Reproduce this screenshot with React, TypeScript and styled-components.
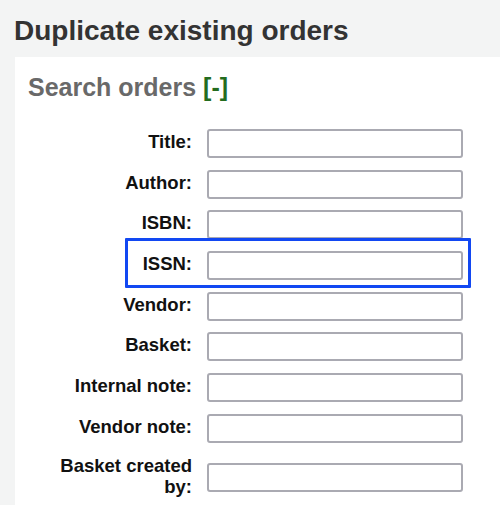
import React from "react";
import styled, { createGlobalStyle } from "styled-components";

const GlobalStyle = createGlobalStyle`
  html, body {
    margin: 0;
    padding: 0;
    height: 100%;
    background: #f3f4f4;
    font-family: "Liberation Sans", Arial, sans-serif;
    overflow: hidden;
  }
  #root {
    height: 100%;
  }
`;

const Page = styled.div`
  box-sizing: border-box;
  height: 100%;
  display: flex;
  flex-direction: column;
  padding: 15px 0 0 15px;
`;

const Title = styled.h1`
  margin: 0 0 10px -1px;
  font-size: 28px;
  line-height: 32px;
  font-weight: 700;
  color: #333;
`;

const Panel = styled.div`
  flex: 1;
  min-height: 0;
  background: #fff;
  padding: 15px 0 0 13px;
`;

const PanelTitle = styled.h3`
  margin: 0;
  font-size: 25px;
  line-height: 30px;
  font-weight: 700;
  color: #696969;
`;

const Toggle = styled.a`
  color: #246c1e;
  text-decoration: none;
  cursor: pointer;
`;

const Fields = styled.ol`
  list-style: none;
  margin: 27px 0 0;
  padding: 0 0 0 24px;
  display: flex;
  flex-direction: column;
  gap: 11.7px;
`;

const Row = styled.li<{ $highlight?: boolean }>`
  position: relative;
  display: flex;
  align-items: center;
  gap: 15px;
  width: max-content;

  &::after {
    content: "";
    display: ${(p) => (p.$highlight ? "block" : "none")};
    position: absolute;
    top: -13px;
    bottom: -8px;
    left: 73px;
    right: -8px;
    border: 3px solid #1248f2;
    border-radius: 1px;
    pointer-events: none;
  }
`;

const Label = styled.label`
  width: 140px;
  text-align: right;
  font-size: 18.5px;
  line-height: 21px;
  font-weight: 700;
  color: #111;
  margin-bottom: 4px;
`;

const Input = styled.input`
  box-sizing: border-box;
  width: 256px;
  height: 29px;
  margin: 0;
  border: 2px solid #aaaab2;
  border-radius: 3px;
  background: #fff;
  font: inherit;
  font-size: 16px;
  padding: 2px 6px;
  outline: none;
`;

const fields = [
  "Title:",
  "Author:",
  "ISBN:",
  "ISSN:",
  "Vendor:",
  "Basket:",
  "Internal note:",
  "Vendor note:",
  "Basket created by:",
];

export default function App() {
  return (
    <>
      <GlobalStyle />
      <Page>
        <Title>Duplicate existing orders</Title>
        <Panel>
          <PanelTitle>
            Search orders <Toggle>[-]</Toggle>
          </PanelTitle>
          <Fields>
            {fields.map((f) => (
              <Row key={f} $highlight={f === "ISSN:"}>
                <Label>{f}</Label>
                <Input type="text" />
              </Row>
            ))}
          </Fields>
        </Panel>
      </Page>
    </>
  );
}
